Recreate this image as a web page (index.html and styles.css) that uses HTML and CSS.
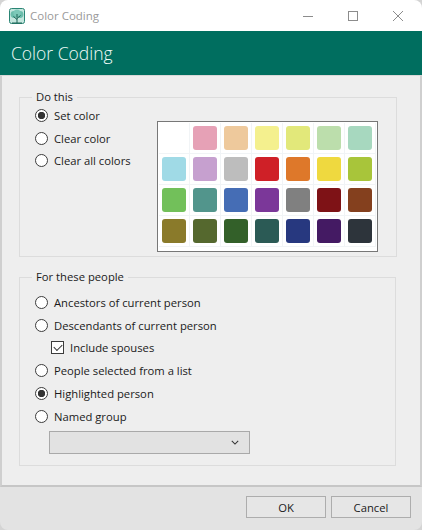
FILE: index.html
```html
<!DOCTYPE html>
<html>
<head>
    <link rel="stylesheet" href="styles.css">
</head>
<body>
    <div class="window">
        <div class="title-bar">
            <svg viewBox="0 0 16 16" class="app-icon">
                <rect x="0.5" y="0.5" width="15" height="15" rx="2" fill="#c4e6de" stroke="#2a8574"/>
                <circle cx="5" cy="6.5" r="3.4" fill="#6bbdac"/>
                <circle cx="11" cy="6.5" r="3.4" fill="#6bbdac"/>
                <circle cx="8" cy="5" r="3.6" fill="#7cc8b8"/>
                <path d="M8 15V6M8 11.5L4.5 8.5M8 10.5l3.5-3M3 15h10" stroke="#1c6557" stroke-width="1" fill="none"/>
            </svg>
            <span class="title-text">Color Coding</span>
            <div class="window-controls">
                <svg viewBox="0 0 10 10" class="control-icon"><path d="M0 5.5h10"/></svg>
                <svg viewBox="0 0 10 10" class="control-icon"><rect x="0.5" y="0.5" width="9" height="9"/></svg>
                <svg viewBox="0 0 10 10" class="control-icon"><path d="M0 0l10 10M10 0L0 10"/></svg>
            </div>
        </div>
        <div class="header-band">Color Coding</div>
        <div class="content">
            <fieldset class="group group-action">
                <legend>Do this</legend>
                <div class="action-row">
                    <div class="option-list">
                        <label class="option"><input type="radio" name="action" checked>Set color</label>
                        <label class="option"><input type="radio" name="action">Clear color</label>
                        <label class="option"><input type="radio" name="action">Clear all colors</label>
                    </div>
                    <div class="palette">
                        <div class="cell"></div>
                        <div class="cell"><div class="swatch" style="background: #e6a1b6"></div></div>
                        <div class="cell"><div class="swatch" style="background: #eec99c"></div></div>
                        <div class="cell"><div class="swatch" style="background: #f4f08e"></div></div>
                        <div class="cell"><div class="swatch" style="background: #e2e87a"></div></div>
                        <div class="cell"><div class="swatch" style="background: #bcdeac"></div></div>
                        <div class="cell"><div class="swatch" style="background: #a7d8bf"></div></div>
                        <div class="cell"><div class="swatch" style="background: #a0dae6"></div></div>
                        <div class="cell"><div class="swatch" style="background: #c6a0cf"></div></div>
                        <div class="cell"><div class="swatch" style="background: #bdbdbd"></div></div>
                        <div class="cell"><div class="swatch" style="background: #cf2027"></div></div>
                        <div class="cell"><div class="swatch" style="background: #de782a"></div></div>
                        <div class="cell"><div class="swatch" style="background: #efd93f"></div></div>
                        <div class="cell"><div class="swatch" style="background: #a8c53a"></div></div>
                        <div class="cell"><div class="swatch" style="background: #72c05a"></div></div>
                        <div class="cell"><div class="swatch" style="background: #52958c"></div></div>
                        <div class="cell"><div class="swatch" style="background: #456db5"></div></div>
                        <div class="cell"><div class="swatch" style="background: #7b3799"></div></div>
                        <div class="cell"><div class="swatch" style="background: #808080"></div></div>
                        <div class="cell"><div class="swatch" style="background: #7e1216"></div></div>
                        <div class="cell"><div class="swatch" style="background: #84401e"></div></div>
                        <div class="cell"><div class="swatch" style="background: #8a7a2a"></div></div>
                        <div class="cell"><div class="swatch" style="background: #55682e"></div></div>
                        <div class="cell"><div class="swatch" style="background: #336029"></div></div>
                        <div class="cell"><div class="swatch" style="background: #2b5a55"></div></div>
                        <div class="cell"><div class="swatch" style="background: #27387f"></div></div>
                        <div class="cell"><div class="swatch" style="background: #441a63"></div></div>
                        <div class="cell"><div class="swatch" style="background: #2d343b"></div></div>
                    </div>
                </div>
            </fieldset>
            <fieldset class="group group-people">
                <legend>For these people</legend>
                <div class="option-list">
                    <label class="option"><input type="radio" name="people">Ancestors of current person</label>
                    <label class="option"><input type="radio" name="people">Descendants of current person</label>
                    <label class="option option-nested"><input type="checkbox" checked>Include spouses</label>
                    <label class="option"><input type="radio" name="people">People selected from a list</label>
                    <label class="option"><input type="radio" name="people" checked>Highlighted person</label>
                    <label class="option"><input type="radio" name="people">Named group</label>
                </div>
                <div class="combo">
                    <svg viewBox="0 0 10 6" class="combo-arrow"><path d="M1 1l4 4 4-4"/></svg>
                </div>
            </fieldset>
        </div>
        <div class="footer">
            <button class="dialog-button">OK</button>
            <button class="dialog-button">Cancel</button>
        </div>
    </div>
</body>
</html>
```

FILE: styles.css
```css
* {
    box-sizing: border-box;
}

body {
    margin: 0;
    background: #d4d4d4;
    font-family: 'Open Sans', sans-serif;
    font-size: 11.25px;
    color: #1a1a1a;
}

.window {
    width: 422px;
    height: 530px;
    display: flex;
    flex-direction: column;
    border-radius: 8px;
    overflow: hidden;
}

.title-bar {
    height: 31px;
    flex: none;
    background: white;
    display: flex;
    align-items: center;
    padding-left: 9px;
}

.app-icon {
    width: 16px;
    height: 16px;
}

.title-text {
    margin-left: 5px;
    color: #9a9a9a;
    font-size: 11.5px;
}

.window-controls {
    margin-left: auto;
    margin-right: 19px;
    display: flex;
    gap: 35px;
}

.control-icon {
    width: 10px;
    height: 10px;
    fill: none;
    stroke: #8c8c8c;
    stroke-width: 1;
}

.header-band {
    height: 44px;
    flex: none;
    background: #006e5f;
    color: #f0fbf8;
    font-size: 17.5px;
    font-weight: 300;
    line-height: 44px;
    padding-left: 11px;
}

.content {
    flex: 1;
    background: #eeeeee;
    border-left: 2px solid #cfcfcf;
    border-right: 2px solid #cfcfcf;
    border-top: 1px solid #d8d8d8;
    border-bottom: 2px solid #c6c6c6;
    padding: 13px 24px 0 17px;
}

.group {
    margin: 0;
    padding: 0;
    border: 1px solid #dcdcdc;
}

.group legend {
    margin-left: -3px;
    padding: 0 4px;
    line-height: 16px;
}

.group-action {
    height: 168px;
    padding: 0 18px 0 15px;
}

.group-people {
    height: 197px;
    margin-top: 12px;
    padding: 6px 0 0 15px;
}

.action-row {
    display: flex;
    margin-top: -1px;
}

.option-list {
    display: flex;
    flex-direction: column;
}

.action-row .option-list {
    width: 122px;
}

.option {
    height: 22.8px;
    display: flex;
    align-items: center;
}

.option input {
    appearance: none;
    width: 13px;
    height: 13px;
    margin: 0 6px 0 0;
    background: white;
    border: 1px solid #3c3c3c;
    flex: none;
}

.option input[type="radio"] {
    border-radius: 50%;
}

.option input[type="radio"]:checked {
    background: radial-gradient(circle, #333333 0 3.4px, white 4px);
}

.option-nested {
    padding-left: 16px;
}

.option-nested input {
    background: white;
    display: flex;
    align-items: center;
    justify-content: center;
}

.option-nested input:checked::after {
    content: "";
    width: 7px;
    height: 4px;
    margin-top: -2px;
    border-left: 1.3px solid #333333;
    border-bottom: 1.3px solid #333333;
    transform: rotate(-45deg);
}

.palette {
    width: 221px;
    height: 131px;
    flex: none;
    margin-top: 17px;
    background: white;
    border: 1px solid #777777;
    padding: 1px;
    display: grid;
    grid-template-columns: repeat(7, 31px);
    grid-template-rows: repeat(4, 31px);
}

.cell {
    padding: 3px;
    border-right: 1px solid #f1f4f6;
    border-bottom: 1px solid #f1f4f6;
}

.swatch {
    width: 24px;
    height: 24px;
    border-radius: 3px;
}

.combo {
    width: 201px;
    height: 23px;
    margin: 3px 0 0 14px;
    background: #e2e2e2;
    border: 1px solid #a9a9a9;
    display: flex;
    align-items: center;
    justify-content: flex-end;
    padding-right: 10px;
}

.combo-arrow {
    width: 8px;
    height: 5px;
    fill: none;
    stroke: #333333;
    stroke-width: 1.3;
}

.footer {
    height: 43px;
    flex: none;
    background: #e3e3e3;
    display: flex;
    justify-content: flex-end;
    gap: 5px;
    padding: 9px 11px 0 0;
}

.dialog-button {
    width: 80px;
    height: 22px;
    background: #e6e6e6;
    border: 1px solid #adadad;
    font-family: 'Open Sans', sans-serif;
    font-size: 11.25px;
    color: #1a1a1a;
    padding: 0;
}
```
